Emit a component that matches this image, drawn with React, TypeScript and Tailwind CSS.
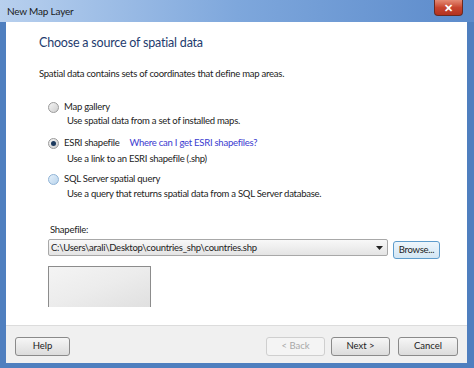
import React from "react";

const font = { fontFamily: 'Lato, "Open Sans", sans-serif' };

function Radio({ checked, hover }: { checked?: boolean; hover?: boolean }) {
  return (
    <span
      className={
        "relative flex h-[11px] w-[11px] shrink-0 items-center justify-center rounded-full border " +
        (hover
          ? "border-[#8fb3d6] bg-gradient-to-br from-[#e6f1fb] to-[#b9d4ec]"
          : "border-[#9a9a9a] bg-gradient-to-br from-[#f4f4f4] to-[#cfcfcf]")
      }
    >
      {checked && <span className="h-[5px] w-[5px] rounded-full bg-[#1d3a5e]" />}
    </span>
  );
}

function Btn({ children, disabled, w }: { children: React.ReactNode; disabled?: boolean; w: string }) {
  return (
    <div
      className={
        "flex h-[19px] items-center justify-center rounded-[3px] border text-[9.5px] " +
        w +
        (disabled
          ? " border-[#cfcfcf] bg-[#f4f4f4] text-[#a8a8a8]"
          : " border-[#8a8a8a] bg-gradient-to-b from-[#f6f6f6] to-[#dcdcdc] text-[#222]")
      }
    >
      {children}
    </div>
  );
}

export default function App() {
  return (
    <div className="flex h-[368px] w-[474px] flex-col bg-[#4f7fbf] text-[#222]" style={font}>
      {/* title bar */}
      <div className="flex h-[22px] items-start bg-gradient-to-r from-[#b8d0ee] via-[#7ea7dc] to-[#5c8bcb]">
        <div className="pl-[7px] pt-[4px] text-[10px] leading-[14px] tracking-[-0.2px] text-[#1b1b1b]">New Map Layer</div>
        <div className="ml-auto mr-[11px] flex h-[16px] w-[29px] items-center justify-center rounded-b-[4px] border border-t-0 border-[#6b2a20] bg-gradient-to-b from-[#e48a74] via-[#c7452f] to-[#b3321f] text-[11px] font-bold leading-none text-white">
          ✕
        </div>
      </div>

      {/* body */}
      <div className="flex flex-1 pl-[6px] pr-[7px] pb-[5px]">
        <div className="flex flex-1 flex-col bg-white">
          <div className="flex flex-1 flex-col pl-[33px] pt-[11px] text-[9.5px] leading-[14px] tracking-[-0.25px]">
            <div className="text-[12.5px] leading-[20px] tracking-[-0.2px] text-[#1e3b6e]">Choose a source of spatial data</div>
            <div className="mt-[14px]">Spatial data contains sets of coordinates that define map areas.</div>

            <div className="ml-[9px] mt-[19px] flex items-center gap-[5px]">
              <Radio />
              <span>Map gallery</span>
            </div>
            <div className="ml-[28px]">Use spatial data from a set of installed maps.</div>

            <div className="ml-[9px] mt-[8px] flex items-center gap-[5px]">
              <Radio checked />
              <span>ESRI shapefile</span>
              <span className="ml-[5px] text-[#3a3ad0]">Where can I get ESRI shapefiles?</span>
            </div>
            <div className="ml-[28px] mt-[2px]">Use a link to an ESRI shapefile (.shp)</div>

            <div className="ml-[9px] mt-[6px] flex items-center gap-[5px]">
              <Radio hover />
              <span>SQL Server spatial query</span>
            </div>
            <div className="ml-[28px] mt-[1px]">Use a query that returns spatial data from a SQL Server database.</div>

            <div className="ml-[11px] mt-[22px]">Shapefile:</div>
            <div className="ml-[9px] mt-[2px] flex items-start">
              <div className="flex h-[17px] w-[340px] items-center rounded-[2px] border border-[#a8a8a8] bg-gradient-to-b from-[#f8f8f8] to-[#e4e4e4] pl-[2px] pr-[4px]">
                <span className="flex-1">C:\Users\arali\Desktop\countries_shp\countries.shp</span>
                <svg width="7" height="4" viewBox="0 0 7 4">
                  <path d="M0 0h7L3.5 4z" fill="#222" />
                </svg>
              </div>
              <div className="ml-[5px] mt-[2px] flex h-[18px] w-[47px] items-center justify-center rounded-[3px] border border-[#5e9ccc] bg-gradient-to-b from-[#eef6fc] to-[#d3e6f4]">
                Browse...
              </div>
            </div>
            <div className="ml-[9px] mt-[7px] h-[41px] w-[103px] border border-b-0 border-[#8c8c8c] bg-gradient-to-br from-[#f4f4f4] via-[#ececec] to-[#e0e0e0]" />
          </div>

          {/* footer */}
          <div className="flex h-[38px] items-start border-t border-[#dcdcdc] bg-[#f0f0f0] px-[9px] pt-[11px]">
            <Btn w="w-[55px]">Help</Btn>
            <div className="ml-auto flex gap-[6px]">
              <Btn w="w-[59px]" disabled>
                &lt; Back
              </Btn>
              <Btn w="w-[59px]">Next &gt;</Btn>
              <div className="ml-[2px]">
                <Btn w="w-[60px]">Cancel</Btn>
              </div>
            </div>
          </div>
        </div>
      </div>
    </div>
  );
}
